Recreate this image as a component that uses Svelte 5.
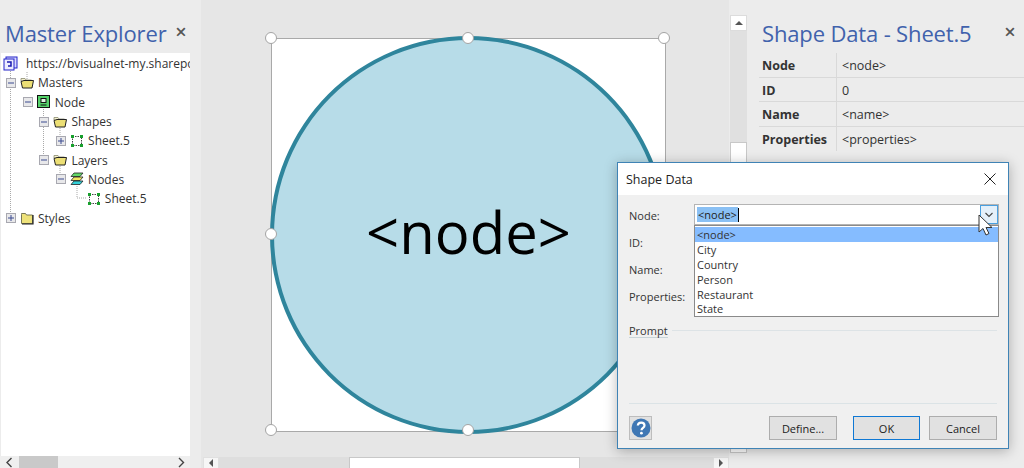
<script>
  const tree = [
    { d: 0, t: 'Masters', i: 'open', e: 'minus' },
    { d: 1, t: 'Node', i: 'master', e: 'minus' },
    { d: 2, t: 'Shapes', i: 'open', e: 'minus' },
    { d: 3, t: 'Sheet.5', i: 'shape', e: 'plus' },
    { d: 2, t: 'Layers', i: 'open', e: 'minus' },
    { d: 3, t: 'Nodes', i: 'layers', e: 'minus' },
    { d: 4, t: 'Sheet.5', i: 'shape', e: '' },
    { d: 0, t: 'Styles', i: 'closed', e: 'plus' }
  ];
  const data = [
    ['Node', '<node>'],
    ['ID', '0'],
    ['Name', '<name>'],
    ['Properties', '<properties>']
  ];
  const options = ['<node>', 'City', 'Country', 'Person', 'Restaurant', 'State'];
  const handles = ['tl', 'tc', 'tr', 'ml', 'bl', 'bc'];
</script>

{#snippet icon(kind)}
  <svg class="ic" width="14" height="14" viewBox="0 0 14 14">
    {#if kind === 'open'}
      <path d="M1 5V2.500h4l1 1.500h5.500v2H4z" fill="#f5f2d0" stroke="#8a8a70" stroke-width=".8"/>
      <path d="M1 5.500l3-1h9.500L12 12H2.500z" fill="#ecdf75" stroke="#222" stroke-width="1"/>
    {:else if kind === 'closed'}
      <path d="M1.500 3.500V2.500h4l1 1.500h6v8.500h-11z" fill="#eee27a" stroke="#6a6a4a" stroke-width=".9"/>
      <path d="M13 4v9H2" fill="none" stroke="#222" stroke-width="1.200"/>
    {:else if kind === 'master'}
      <rect x=".5" y=".5" width="12" height="12" fill="#55d36a" stroke="#111"/>
      <rect x="4" y="3.500" width="5" height="4" fill="#dff5e0" stroke="#111" stroke-width="1"/>
      <path d="M3.500 10h6" stroke="#111"/>
    {:else if kind === 'shape'}
      <rect x="2.500" y="2.500" width="9" height="9" fill="#fff" stroke="#444" stroke-dasharray="1.500 1"/>
      <g fill="#17a02c">
        <rect x="1" y="1" width="3" height="3"/><rect x="10" y="1" width="3" height="3"/>
        <rect x="1" y="10" width="3" height="3"/><rect x="10" y="10" width="3" height="3"/>
      </g>
    {:else if kind === 'layers'}
      <path d="M4 1h9l-3 3.500H1z" fill="#62d868" stroke="#222" stroke-width=".8"/>
      <path d="M4 5h9l-3 3.500H1z" fill="#f0e562" stroke="#222" stroke-width=".8"/>
      <path d="M4 9h9l-3 3.500H1z" fill="#32d0d8" stroke="#222" stroke-width=".8"/>
    {/if}
  </svg>
{/snippet}

<div class="app">
  <aside class="left">
    <header class="ptitle"><h2>Master Explorer</h2><span class="x">×</span></header>
    <div class="tree">
      <svg class="guides" width="190" height="180">
        <g fill="none" stroke="#a9a9a9" stroke-dasharray="1 1">
          <path d="M10.500 16V164M27 19v12M43.500 56V107M60 75v12M60 113v12M77 133v12H87"/>
        </g>
      </svg>
      <div class="row root">
        <svg class="ic" width="15" height="15" viewBox="0 0 15 15">
          <rect x="3" y="1" width="11" height="11" fill="#d8d8ff" stroke="#2323c8"/>
          <rect x="1" y="3" width="10" height="11" fill="#ececff" stroke="#2323c8"/>
          <path d="M4 6h4v4H5" fill="none" stroke="#1a1ab0" stroke-width="1.500"/>
        </svg>
        <span>https://bvisualnet-my.sharepoint.com</span>
      </div>
      {#each tree as n}
        <div class="row" style="padding-left:{5 + n.d * 16.7}px">
          <span class="exp">
            {#if n.e}
              <svg width="10" height="10" viewBox="0 0 10 10">
                <rect x=".5" y=".5" width="9" height="9" fill="#e8e8ea" stroke="#a8a8b0"/>
                <path d="M2 5h6" stroke="#3a4a90"/>
                {#if n.e === 'plus'}<path d="M5 2v6" stroke="#3a4a90"/>{/if}
              </svg>
            {/if}
          </span>
          {@render icon(n.i)}
          <span>{n.t}</span>
        </div>
      {/each}
    </div>
    <div class="lscroll">
      <svg width="19" height="12" viewBox="0 0 19 12"><path d="M11.500 2L7 6.500l4.500 4.500" fill="none" stroke="#444" stroke-width="1.400"/></svg>
      <span class="lthumb"></span>
      <svg class="lnext" width="19" height="12" viewBox="0 0 19 12"><path d="M8 2l4.500 4.500L8 11" fill="none" stroke="#444" stroke-width="1.400"/></svg>
    </div>
  </aside>

  <main class="canvas">
    <div class="stage">
      <div class="page">
        <div class="circle"><span>&lt;node&gt;</span></div>
        {#each handles as h}<span class="handle {h}"></span>{/each}
      </div>
    </div>
    <div class="hscroll">
      <span class="btn"><i class="tri-l"></i></span>
      <span class="track w1"></span>
      <span class="thumb"></span>
      <span class="track"></span>
      <span class="btn"><i class="tri-r"></i></span>
    </div>
  </main>

  <div class="vscroll">
    <span class="vbtn"><i class="tri-u"></i></span>
    <span class="vtrack"></span>
    <span class="vthumb"></span>
  </div>

  <aside class="right">
    <header class="ptitle rt"><h2>Shape Data - Sheet.5</h2><span class="x">×</span></header>
    <div class="grid">
      {#each data as [k, v]}
        <div class="k">{k}</div>
        <div class="v">{v}</div>
      {/each}
    </div>
  </aside>

  <section class="dialog">
    <header class="dtitle">
      <span>Shape Data</span>
      <svg width="12" height="12" viewBox="0 0 12 12"><path d="M.5.5l11 11M11.500.5l-11 11" stroke="#222" stroke-width="1"/></svg>
    </header>
    <div class="dbody">
      <div class="fields">
        <label>Node:</label>
        <div class="combo">
          <span class="sel">&lt;node&gt;</span><span class="caret"></span>
          <span class="drop">
            <svg width="10" height="6" viewBox="0 0 10 6"><path d="M1.500 1L5 4.500 8.500 1" fill="none" stroke="#444" stroke-width="1.100"/></svg>
          </span>
        </div>
        <label>ID:</label><div></div>
        <label>Name:</label><div></div>
        <label>Properties:</label><div></div>
      </div>
      <div class="prompt"><span>Prompt</span><i></i></div>
      <div class="spacer"></div>
      <div class="foot">
        <button class="help" aria-label="Help">
          <svg width="20" height="20" viewBox="0 0 20 20">
            <circle cx="10" cy="10" r="9.500" fill="#3f77b4"/>
            <path d="M6.800 7.500C7 5.500 8.500 4.600 10.200 4.600c2 0 3.300 1.200 3.300 2.800 0 2.400-3 2.500-3 4.900" fill="none" stroke="#fff" stroke-width="2.200"/>
            <circle cx="10.400" cy="15.200" r="1.400" fill="#fff"/>
          </svg>
        </button>
        <span class="grow"></span>
        <button class="b def">Define...</button>
        <button class="b ok">OK</button>
        <button class="b cancel">Cancel</button>
      </div>
    </div>
    <ul class="list">
      {#each options as o, i}<li class:on={i === 0}>{o}</li>{/each}
    </ul>
    <svg class="cursor" width="16" height="24" viewBox="0 0 16 24">
      <path d="M1 1v17l4-3.500L8 21l3-1.500-3-6h6z" fill="#fff" stroke="#333" stroke-width="1"/>
    </svg>
  </section>
</div>

<style>
  :global(body) { margin: 0; }
  .app {
    position: relative; width: 1024px; height: 468px; overflow: hidden;
    display: flex; background: #ececec;
    font-family: "Open Sans", "Noto Sans", sans-serif; color: #222;
  }
  .left { width: 190px; flex: none; display: flex; flex-direction: column; }
  .ptitle { height: 53px; box-sizing: border-box; padding: 18px 1px 0 5px; display: flex; justify-content: space-between; align-items: flex-start; }
  h2 { margin: 0; font-weight: 400; font-size: 22px; line-height: 30px; color: #4162ac; white-space: nowrap; letter-spacing: -.15px; }
  .x { font-size: 20px; line-height: 27px; color: #555; font-weight: 600; width: 16px; text-align: center; }
  .tree { position: relative; flex: 1; margin-left: 1px; background: #fff; overflow: hidden; padding-top: 1px; font-size: 12px; }
  .guides { position: absolute; left: -1px; top: 0; }
  .row { position: relative; height: 19.300px; display: flex; align-items: center; white-space: nowrap; color: #333; }
  .root { padding-left: 2px; gap: 4px; }
  .exp { width: 14px; flex: none; display: flex; }
  .row .ic { flex: none; margin-right: 4px; }
  .lscroll { height: 12px; background: #efefef; display: flex; overflow: hidden; }
  .lthumb { width: 39px; background: #c9c9c9; }
  .lnext { margin-left: auto; }

  .canvas { width: 528px; margin-left: 11px; flex: none; display: flex; flex-direction: column; background: #e6e6e6; }
  .stage { flex: 1; padding: 38px 0 0 70px; }
  .page { position: relative; width: 395px; height: 394px; box-sizing: border-box; background: #fff; border: 1px solid #a9a9a9; }
  .circle {
    position: absolute; inset: -3px -2px -3px -2px; border-radius: 50%;
    border: 4px solid #2f859c; background: #b7dce8;
    display: flex; align-items: center; justify-content: center;
    font-size: 58px; color: #000; line-height: 1;
  }
  .circle span { position: relative; top: -3px; }
  .handle { position: absolute; width: 10px; height: 10px; border-radius: 50%; background: #fff; border: 1.500px solid #a4a4a4; margin: -7px; }
  .tl { left: 0; top: 0; } .tc { left: 50%; top: 0; } .tr { left: 100%; top: 0; }
  .ml { left: 0; top: 50%; } .bl { left: 0; top: 100%; } .bc { left: 50%; top: 100%; }
  .hscroll { height: 11px; display: flex; margin-left: 2px; background: #ececec; }
  .btn { width: 16px; background: #f6f6f6; border: 1px solid #e0e0e0; border-bottom: 0; box-sizing: border-box; display: flex; align-items: center; justify-content: center; }
  .track { flex: 1; background: #dedede; }
  .track.w1 { flex: none; width: 130px; }
  .thumb { width: 231px; background: #fff; border: 1px solid #c8c8c8; border-bottom: 0; box-sizing: border-box; }
  .tri-l, .tri-r, .tri-u { display: block; width: 0; height: 0; border: 4px solid transparent; }
  .tri-l { border-right-color: #555; border-left: 0; }
  .tri-r { border-left-color: #555; border-right: 0; }
  .tri-u { border-bottom-color: #555; border-top: 0; }

  .vscroll { width: 17px; margin: 15px 0 15px 1px; flex: none; display: flex; flex-direction: column; background: #e0e0e0; }
  .vbtn { height: 16px; background: #fff; border: 1px solid #dcdcdc; box-sizing: border-box; display: flex; align-items: center; justify-content: center; }
  .vtrack { height: 111px; }
  .vthumb { flex: 1; background: #fff; border: 1px solid #c8c8c8; box-sizing: border-box; }

  .right { flex: 1; margin-left: 12px; min-width: 0; }
  .rt { padding: 18px 6px 0 3px; }
  .grid { display: grid; grid-template-columns: 77px 1fr; font-size: 12.500px; color: #333; }
  .k, .v { height: 24.500px; line-height: 26px; box-sizing: border-box; border-bottom: 1px solid #d9d9d9; white-space: nowrap; padding-left: 3px; }
  .k { font-weight: 700; }
  .v { border-left: 1px solid #d9d9d9; padding-left: 5px; }
  .grid > :nth-last-child(-n+2) { border-bottom: 0; }

  .dialog {
    position: absolute; left: 617px; top: 162px; width: 392px; height: 287px; box-sizing: border-box;
    border: 1px solid #3f83b5; background: #f0f0f0; display: flex; flex-direction: column;
    box-shadow: 0 2px 12px rgba(0,0,0,.28); font-size: 11px; color: #333;
  }
  .dtitle { height: 32px; flex: none; background: #fff; display: flex; align-items: center; justify-content: space-between; padding: 0 12px 0 8px; font-size: 12.500px; color: #222; }
  .dbody { flex: 1; display: flex; flex-direction: column; padding: 9px 11px 8px 11px; }
  .fields { display: grid; grid-template-columns: 65px 305px; grid-auto-rows: 27px; margin-right: -1px; }
  label { line-height: 24px; }
  .combo { position: relative; height: 21px; background: #fff; border: 1px solid #b4b4b4; box-sizing: border-box; display: flex; align-items: center; padding-left: 2px; font-size: 11px; }
  .sel { background: #8ac0f4; line-height: 15px; padding: 0 1px; color: #222; }
  .caret { width: 1px; height: 14px; background: #000; }
  .drop { position: absolute; right: 0; top: 0; bottom: 0; width: 18px; box-sizing: border-box; border: 1px solid #4aa0e0; background: #e4f0fa; display: flex; align-items: center; justify-content: center; }
  .prompt { margin-top: 12px; display: flex; align-items: center; gap: 4px; }
  .prompt span { border-bottom: 1px solid #c8d4d8; line-height: 13px; }
  .prompt i { flex: 1; height: 1px; background: #dde3e6; margin-top: -2px; }
  .spacer { flex: 1; }
  .foot { display: flex; align-items: center; border-top: 1px solid #dbe3e6; padding-top: 12px; }
  .grow { flex: 1; }
  button { font: inherit; padding: 0; color: #222; box-sizing: border-box; }
  .help { width: 23px; height: 24px; border: 1px solid #bdbdbd; background: #e1e1e1; display: flex; align-items: center; justify-content: center; }
  .b { height: 24px; width: 68px; background: #e1e1e1; border: 1px solid #adadad; }
  .ok { width: 67px; border: 1px solid #0f78d4; margin-left: 16px; }
  .cancel { margin-left: 9px; }
  .list {
    position: absolute; left: 76px; top: 62px; width: 305px; box-sizing: border-box; margin: 0; padding: 1px 0 0;
    list-style: none; background: #fff; border: 1px solid #8a8a8a; height: 92px;
  }
  .list li { height: 14.900px; line-height: 15px; padding-left: 2px; color: #333; white-space: nowrap; }
  .list li.on { background: #85bcff; }
  .cursor { position: absolute; left: 360px; top: 51px; }
</style>
